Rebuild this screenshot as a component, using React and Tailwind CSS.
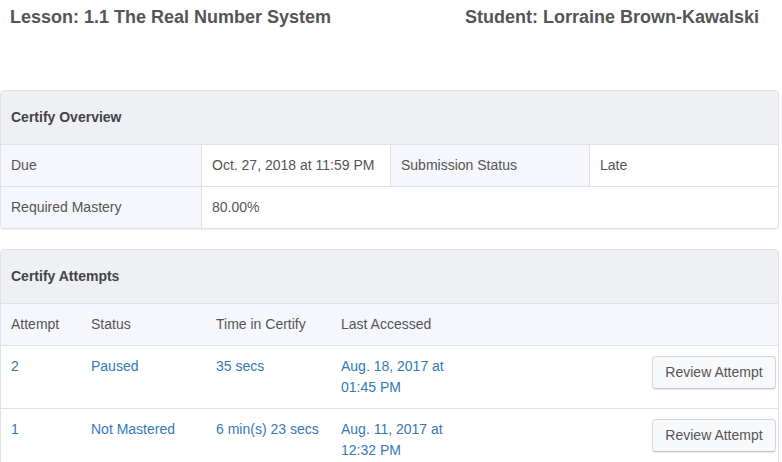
const font = { fontFamily: '"Liberation Sans", Arial, sans-serif' };

function Cell({ className = "", children }) {
  return <div className={"px-[10px] flex items-center " + className}>{children}</div>;
}

function Attempt({ n, status, time, a, b, last }) {
  return (
    <div className={"flex h-[63px] text-[14px] leading-[20px] text-[#337ab7] " + (last ? "" : "border-b border-[#dfe0ea]")}>
      <div className="w-[80px] pl-[10px] pt-[10px]">{n}</div>
      <div className="w-[125px] pl-[10px] pt-[10px]">{status}</div>
      <div className="w-[125px] pl-[10px] pt-[10px]">{time}</div>
      <div className="w-[125px] pl-[10px] pt-[10px] leading-[21px]"><div>{a}</div><div>{b}</div></div>
      <div className="flex-1 flex justify-end pr-[2px] pt-[10px]">
        <button className="w-[124px] h-[33px] pb-[2px] border border-[#d5d6e0] border-b-[#c4c5d0] rounded-[4px] bg-[#f8f9fb] text-[#555555] text-[14px] shadow-[0_1px_1px_rgba(0,0,0,0.08)]">Review Attempt</button>
      </div>
    </div>
  );
}

export default function App() {
  return (
    <div style={font} className="w-[782px] h-[462px] overflow-hidden bg-white text-[#555555]">
      <div className="flex justify-between h-[90px] pl-[10px] pr-[23px] pt-[6px] text-[18px] leading-[22px] font-bold">
        <div>Lesson: 1.1 The Real Number System</div>
        <div>Student: Lorraine Brown-Kawalski</div>
      </div>
      <div className="w-[779px] border border-[#dfe0ea] rounded-[4px] text-[14px] shadow-[0_1px_2px_rgba(0,0,0,0.06)] overflow-hidden">
        <div className="h-[54px] bg-[#eff0f4] border-b border-[#dfe0ea] flex items-center px-[10px] font-bold text-[14px] text-[#444444]">Certify Overview</div>
        <div className="flex h-[42px] border-b border-[#dfe0ea]">
          <Cell className="w-[201px] bg-[#f6f7fc] border-r border-[#dfe0ea]">Due</Cell>
          <Cell className="w-[189px] border-r border-[#dfe0ea]">Oct. 27, 2018 at 11:59 PM</Cell>
          <Cell className="w-[199px] bg-[#f6f7fc] border-r border-[#dfe0ea]">Submission Status</Cell>
          <Cell className="flex-1">Late</Cell>
        </div>
        <div className="flex h-[41px]">
          <Cell className="w-[201px] bg-[#f6f7fc] border-r border-[#dfe0ea]">Required Mastery</Cell>
          <Cell className="flex-1">80.00%</Cell>
        </div>
      </div>
      <div className="mt-[20px] w-[779px] border border-[#dfe0ea] rounded-[4px] text-[14px] overflow-hidden">
        <div className="h-[54px] bg-[#eff0f4] border-b border-[#dfe0ea] flex items-center px-[10px] font-bold text-[14px] text-[#444444]">Certify Attempts</div>
        <div className="flex h-[42px] items-center bg-[#f6f7fc] border-b border-[#dfe0ea]">
          <div className="w-[80px] pl-[10px]">Attempt</div>
          <div className="w-[125px] pl-[10px]">Status</div>
          <div className="w-[125px] pl-[10px]">Time in Certify</div>
          <div className="w-[125px] pl-[10px]">Last Accessed</div>
        </div>
        <Attempt n="2" status="Paused" time="35 secs" a="Aug. 18, 2017 at" b="01:45 PM" />
        <Attempt n="1" status="Not Mastered" time="6 min(s) 23 secs" a="Aug. 11, 2017 at" b="12:32 PM" last />
      </div>
    </div>
  );
}
